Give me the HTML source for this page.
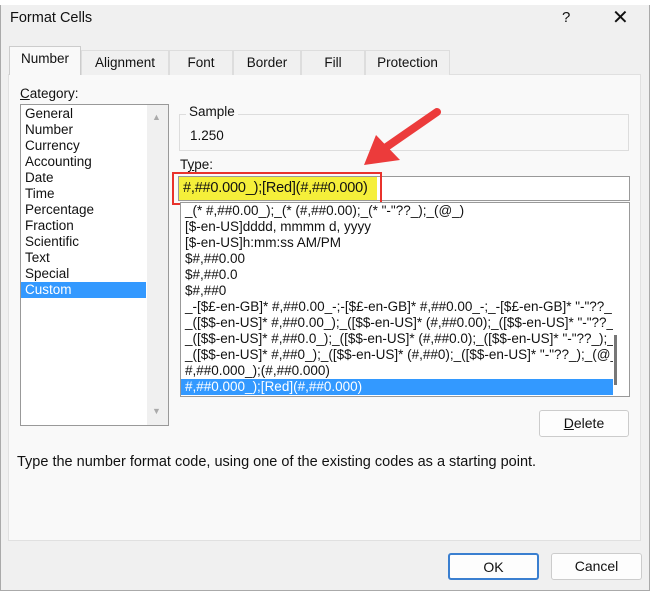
<!DOCTYPE html><html><head><style>
*{margin:0;padding:0;box-sizing:border-box}
body{width:650px;height:591px;background:#fff;font-family:"Liberation Sans",sans-serif;font-size:13px;color:#111;position:relative;overflow:hidden}
.abs{position:absolute}
.dlg{left:0;top:0;width:650px;height:591px;background:#f0f0f0;border:1px solid #aaa}
.panel{left:8px;top:74px;width:633px;height:467px;background:#f9f9f9;border:1px solid #e0e0e0}
.tab{top:50px;height:25px;background:#f0f0f0;border:1px solid #ddd;border-bottom:none;padding-top:4px;text-align:center;font-size:13.5px}
.list div{height:16px;line-height:16px;padding-left:4px;white-space:nowrap}
.btn{background:#fdfdfd;border:1px solid #ccc;border-radius:3px;text-align:center;line-height:24px;font-size:14px}
</style></head><body>
<div class="abs dlg"></div>
<div class="abs" style="left:0;top:0;width:650px;height:5px;background:#fff"></div>
<div class="abs" style="left:10px;top:10px;font-size:14.5px">Format Cells</div>
<div class="abs" style="left:562px;top:9px;font-size:15px">?</div>
<div class="abs" style="left:612px;top:5px;font-size:20px;font-weight:300">✕</div>
<div class="abs panel"></div>
<div class="abs tab" style="left:9px;width:72px;top:46px;height:29px;background:#f9f9f9;border-color:#ccc">Number</div>
<div class="abs tab" style="left:81px;width:88px">Alignment</div>
<div class="abs tab" style="left:169px;width:64px">Font</div>
<div class="abs tab" style="left:233px;width:68px">Border</div>
<div class="abs tab" style="left:301px;width:64px">Fill</div>
<div class="abs tab" style="left:365px;width:85px">Protection</div>
<div class="abs" style="left:20px;top:86px;font-size:13.5px"><u>C</u>ategory:</div>
<div class="abs" style="left:20px;top:104px;width:149px;height:322px;background:#fff;border:1px solid #999"></div>
<div class="abs" style="left:147px;top:105px;width:21px;height:320px;background:#f0f0f0"></div>
<div class="abs" style="left:152px;top:112px;font-size:9px;color:#aaa">▲</div>
<div class="abs" style="left:152px;top:406px;font-size:9px;color:#aaa">▼</div>
<div class="abs list" style="left:21px;top:106px;width:125px;font-size:13.5px">
<div>General</div><div>Number</div><div>Currency</div><div>Accounting</div><div>Date</div><div>Time</div><div>Percentage</div><div>Fraction</div><div>Scientific</div><div>Text</div><div>Special</div><div style="background:#3399ff;color:#fff">Custom</div></div>
<div class="abs" style="left:179px;top:114px;width:450px;height:37px;border:1px solid #ddd"></div>
<div class="abs" style="left:186px;top:104px;background:#f9f9f9;padding:0 3px;font-size:13.5px">Sample</div>
<div class="abs" style="left:190px;top:128px;font-size:13.5px">1.250</div>
<div class="abs" style="left:180px;top:157px;font-size:13.5px">T<u>y</u>pe:</div>
<div class="abs" style="left:178px;top:176px;width:452px;height:25px;background:#fff;border:1px solid #999"></div>
<div class="abs" style="left:172px;top:172px;width:210px;height:33px;border:2px solid #e8322c"></div>
<div class="abs" style="left:179px;top:177px;width:198px;height:23px;background:#f5ef3a"></div>
<div class="abs" style="left:183px;top:180px;font-size:14.5px;letter-spacing:-0.2px">#,##0.000_);[Red](#,##0.000)</div>
<div class="abs" style="left:180px;top:202px;width:450px;height:195px;background:#fff;border:1px solid #999"></div>
<div class="abs" style="left:614px;top:335px;width:3px;height:50px;background:#777"></div>
<div class="abs list" style="left:181px;top:203px;width:432px;overflow:hidden;font-size:13.5px">
<div>_(* #,##0.00_);_(* (#,##0.00);_(* "-"??_);_(@_)</div>
<div>[$-en-US]dddd, mmmm d, yyyy</div>
<div>[$-en-US]h:mm:ss AM/PM</div>
<div>$#,##0.00</div><div>$#,##0.0</div><div>$#,##0</div>
<div>_-[$£-en-GB]* #,##0.00_-;-[$£-en-GB]* #,##0.00_-;_-[$£-en-GB]* "-"??_</div>
<div>_([$$-en-US]* #,##0.00_);_([$$-en-US]* (#,##0.00);_([$$-en-US]* "-"??_)</div>
<div>_([$$-en-US]* #,##0.0_);_([$$-en-US]* (#,##0.0);_([$$-en-US]* "-"??_);_(</div>
<div>_([$$-en-US]* #,##0_);_([$$-en-US]* (#,##0);_([$$-en-US]* "-"??_);_(@_)</div>
<div>#,##0.000_);(#,##0.000)</div>
<div style="background:#3399ff;color:#fff">#,##0.000_);[Red](#,##0.000)</div></div>
<div class="abs btn" style="left:539px;top:410px;width:90px;height:27px"><u>D</u>elete</div>
<div class="abs" style="left:17px;top:454px;font-size:14.5px">Type the number format code, using one of the existing codes as a starting point.</div>
<div class="abs btn" style="left:448px;top:553px;width:91px;height:27px;border:2px solid #3a7fd0">OK</div>
<div class="abs btn" style="left:551px;top:553px;width:91px;height:27px">Cancel</div>
<svg class="abs" style="left:0;top:0" width="650" height="591"><line x1="437" y1="112" x2="385" y2="148" stroke="#ec3b3b" stroke-width="8" stroke-linecap="round"/><polygon points="364,165 376,135 400,160" fill="#ec3b3b"/></svg>
</body></html>
